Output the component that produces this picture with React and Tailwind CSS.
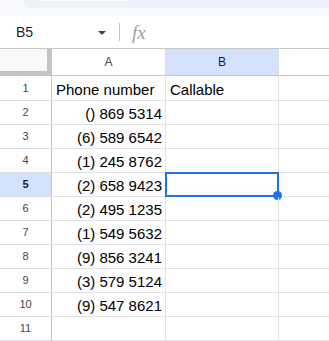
import React from 'react';

const rows = [
  { n: 1, a: 'Phone number', b: 'Callable', text: true },
  { n: 2, a: '() 869 5314' },
  { n: 3, a: '(6) 589 6542' },
  { n: 4, a: '(1) 245 8762' },
  { n: 5, a: '(2) 658 9423', selected: true },
  { n: 6, a: '(2) 495 1235' },
  { n: 7, a: '(1) 549 5632' },
  { n: 8, a: '(9) 856 3241' },
  { n: 9, a: '(3) 579 5124' },
  { n: 10, a: '(9) 547 8621' },
  { n: 11, a: '' },
];

const App = () => {
  return (
    <div className="w-[329px] h-[341px] overflow-hidden bg-white font-['Liberation_Sans',Arial,sans-serif] text-[#000]">
      {/* top strip */}
      <div className="h-4 flex bg-[#f8fafd]">
        <div className="w-[23px]" />
        <div className="flex-1 h-2 bg-[#edf2fa] rounded-bl-[10px]">
          <div className="ml-[15px] w-[91px] h-px bg-white rounded-b" />
        </div>
      </div>

      {/* name box / formula bar */}
      <div className="h-[33px] flex items-center border-b border-[#c4c7c5]">
        <div className="pl-4 w-[98px] text-[14px] text-[#1f1f1f]">B5</div>
        <svg width="8" height="4" viewBox="0 0 8 4" className="mt-px">
          <path d="M0 0h8L4 4z" fill="#444746" />
        </svg>
        <div className="ml-[13px] w-px h-[18px] bg-[#c4c7c5]" />
        <div className="ml-[12px] font-['Liberation_Serif',serif] italic text-[19px] text-[#9aa0a6] leading-none">fx</div>
      </div>

      {/* grid */}
      <div className="grid grid-cols-[52px_114px_113px_1fr]">
        {/* header row */}
        <div className="h-[27px] bg-[#f8f9fa] border-r-[5px] border-b-[5px] border-[#c4c4c4]" />
        <div className="h-[27px] flex items-center justify-center border-r border-b border-r-[#dadce0] border-b-[#c4c7c5] text-[12px] text-[#444746]">A</div>
        <div className="h-[27px] flex items-center justify-center bg-[#d3e3fd] border-r border-b border-r-[#dadce0] border-b-[#c4c7c5] text-[12px] text-[#041e49]">B</div>
        <div className="h-[27px] border-b border-[#c4c7c5]" />

        {rows.map((r) => {
          const h = r.n === 1 ? 'h-[25px]' : 'h-6';
          return (
            <React.Fragment key={r.n}>
              <div
                className={`${h} flex items-center justify-center border-r border-b border-r-[#c4c7c5] border-b-[#dadce0] text-[11px] ${
                  r.selected ? 'bg-[#d3e3fd] text-[#041e49] font-bold' : 'text-[#444746]'
                }`}
              >
                {r.n}
              </div>
              <div
                className={`${h} flex items-end pb-[2px] border-r border-b border-[#e1e1e1] text-[15px] leading-[17px] whitespace-nowrap ${
                  r.text ? 'justify-start pl-1' : 'justify-end pr-[3px]'
                }`}
              >
                {r.a}
              </div>
              <div className={`${h} relative flex items-end pb-[2px] pl-1 border-r border-b border-[#e1e1e1] text-[15px] leading-[17px]`}>
                {r.b}
                {r.selected && (
                  <div className="absolute -left-px -top-px w-[114px] h-[25px] border-2 border-[#1a73e8]">
                    <div className="absolute -right-[5px] -bottom-[5px] w-[9px] h-[9px] rounded-full bg-[#1a73e8]" />
                  </div>
                )}
              </div>
              <div className={`${h} border-b border-[#e1e1e1]`} />
            </React.Fragment>
          );
        })}
      </div>
    </div>
  );
};

export default App;
